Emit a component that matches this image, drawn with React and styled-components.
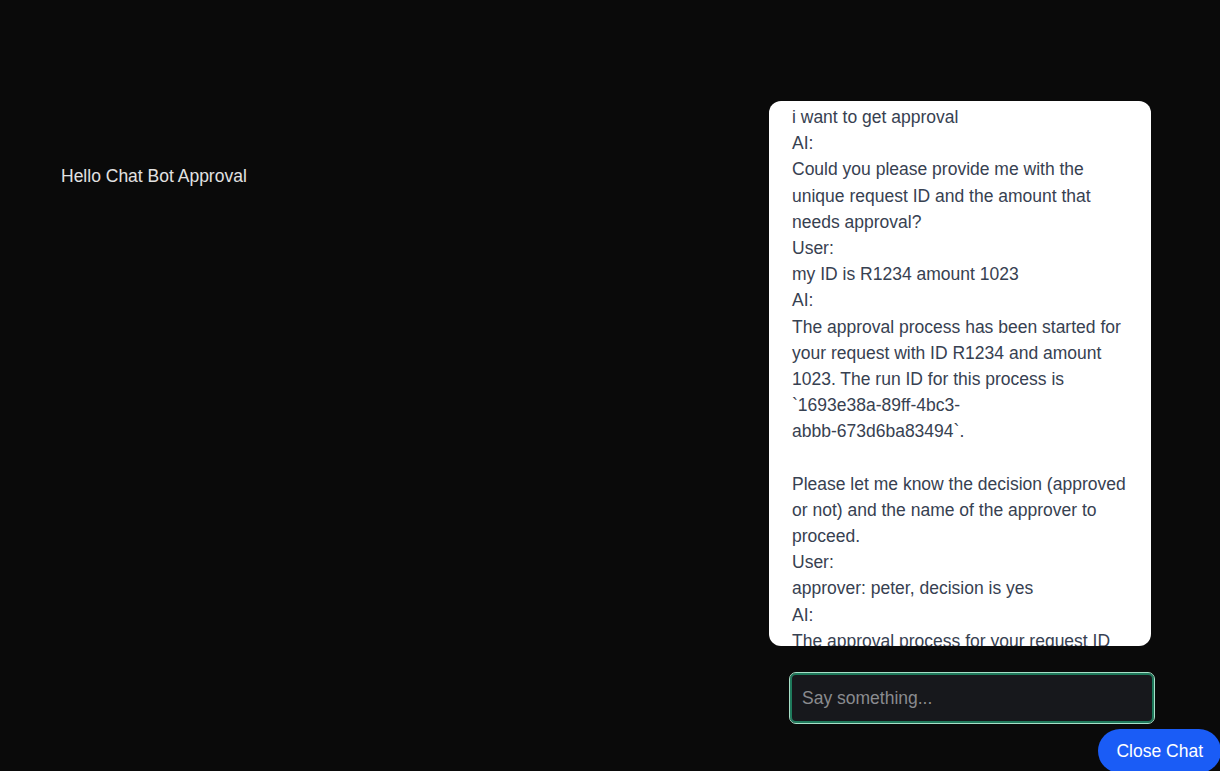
import styled, { createGlobalStyle } from "styled-components";

const GlobalStyle = createGlobalStyle`
  html, body {
    margin: 0;
    padding: 0;
    background: #0a0a0a;
    font-family: "Liberation Sans", Arial, sans-serif;
    overflow: hidden;
  }
`;

const Page = styled.div`
  width: 100vw;
  height: 100vh;
  display: flex;
  background: #0a0a0a;
  position: relative;
`;

const Intro = styled.div`
  flex: 1;
  padding: 165px 0 0 61px;
  color: #e2e2e2;
  font-size: 17.5px;
  line-height: 22px;
`;

const ChatColumn = styled.div`
  width: 451px;
  padding-top: 101px;
  display: flex;
  flex-direction: column;
`;

const Messages = styled.div`
  width: 382px;
  height: 545px;
  box-sizing: border-box;
  background: #ffffff;
  border-radius: 12px;
  padding: 3px 23px 0;
  overflow: hidden;
  color: #374151;
  font-size: 17.5px;
  line-height: 26.2px;
`;

const Line = styled.div`
  white-space: pre-wrap;
  min-height: 26px;
`;

const NoWrap = styled.span`
  white-space: nowrap;
`;

const InputWrap = styled.div`
  margin: 27px 0 0 21px;
`;

const Input = styled.input`
  width: 364px;
  height: 50px;
  box-sizing: border-box;
  background: #17181c;
  border: 2px solid #1f7a5c;
  outline: 1px solid #a8e0c8;
  outline-offset: 0;
  border-radius: 6px;
  padding: 0 10px;
  color: #e5e5e5;
  font-family: "Liberation Sans", Arial, sans-serif;
  font-size: 17.5px;

  &::placeholder {
    color: #8a8b8f;
  }
`;

const CloseButton = styled.button`
  position: absolute;
  right: -1px;
  bottom: -2px;
  height: 44px;
  padding: 0 18px;
  border: none;
  border-radius: 22px;
  background: #1a5cf6;
  color: #ffffff;
  font-family: "Liberation Sans", Arial, sans-serif;
  font-size: 17.5px;
  cursor: pointer;
`;

const lines = [
  "i want to get approval",
  "AI:",
  "Could you please provide me with the unique request ID and the amount that needs approval?",
  "User:",
  "my ID is R1234 amount 1023",
  "AI:",
  <>
    The approval process has been started for your request with ID R1234 and
    amount 1023. The run ID for this process is{" "}
    <NoWrap>`1693e38a-89ff-4bc3-</NoWrap>
    <NoWrap>abbb-673d6ba83494`.</NoWrap>
  </>,
  "",
  "Please let me know the decision (approved or not) and the name of the approver to proceed.",
  "User:",
  "approver: peter, decision is yes",
  "AI:",
  "The approval process for your request ID R1234 has been completed.",
];

const App = () => {
  return (
    <Page>
      <GlobalStyle />
      <Intro>Hello Chat Bot Approval</Intro>
      <ChatColumn>
        <Messages>
          {lines.map((l, i) => (
            <Line key={i}>{l}</Line>
          ))}
        </Messages>
        <InputWrap>
          <Input placeholder="Say something..." />
        </InputWrap>
      </ChatColumn>
      <CloseButton>Close Chat</CloseButton>
    </Page>
  );
};

export default App;
